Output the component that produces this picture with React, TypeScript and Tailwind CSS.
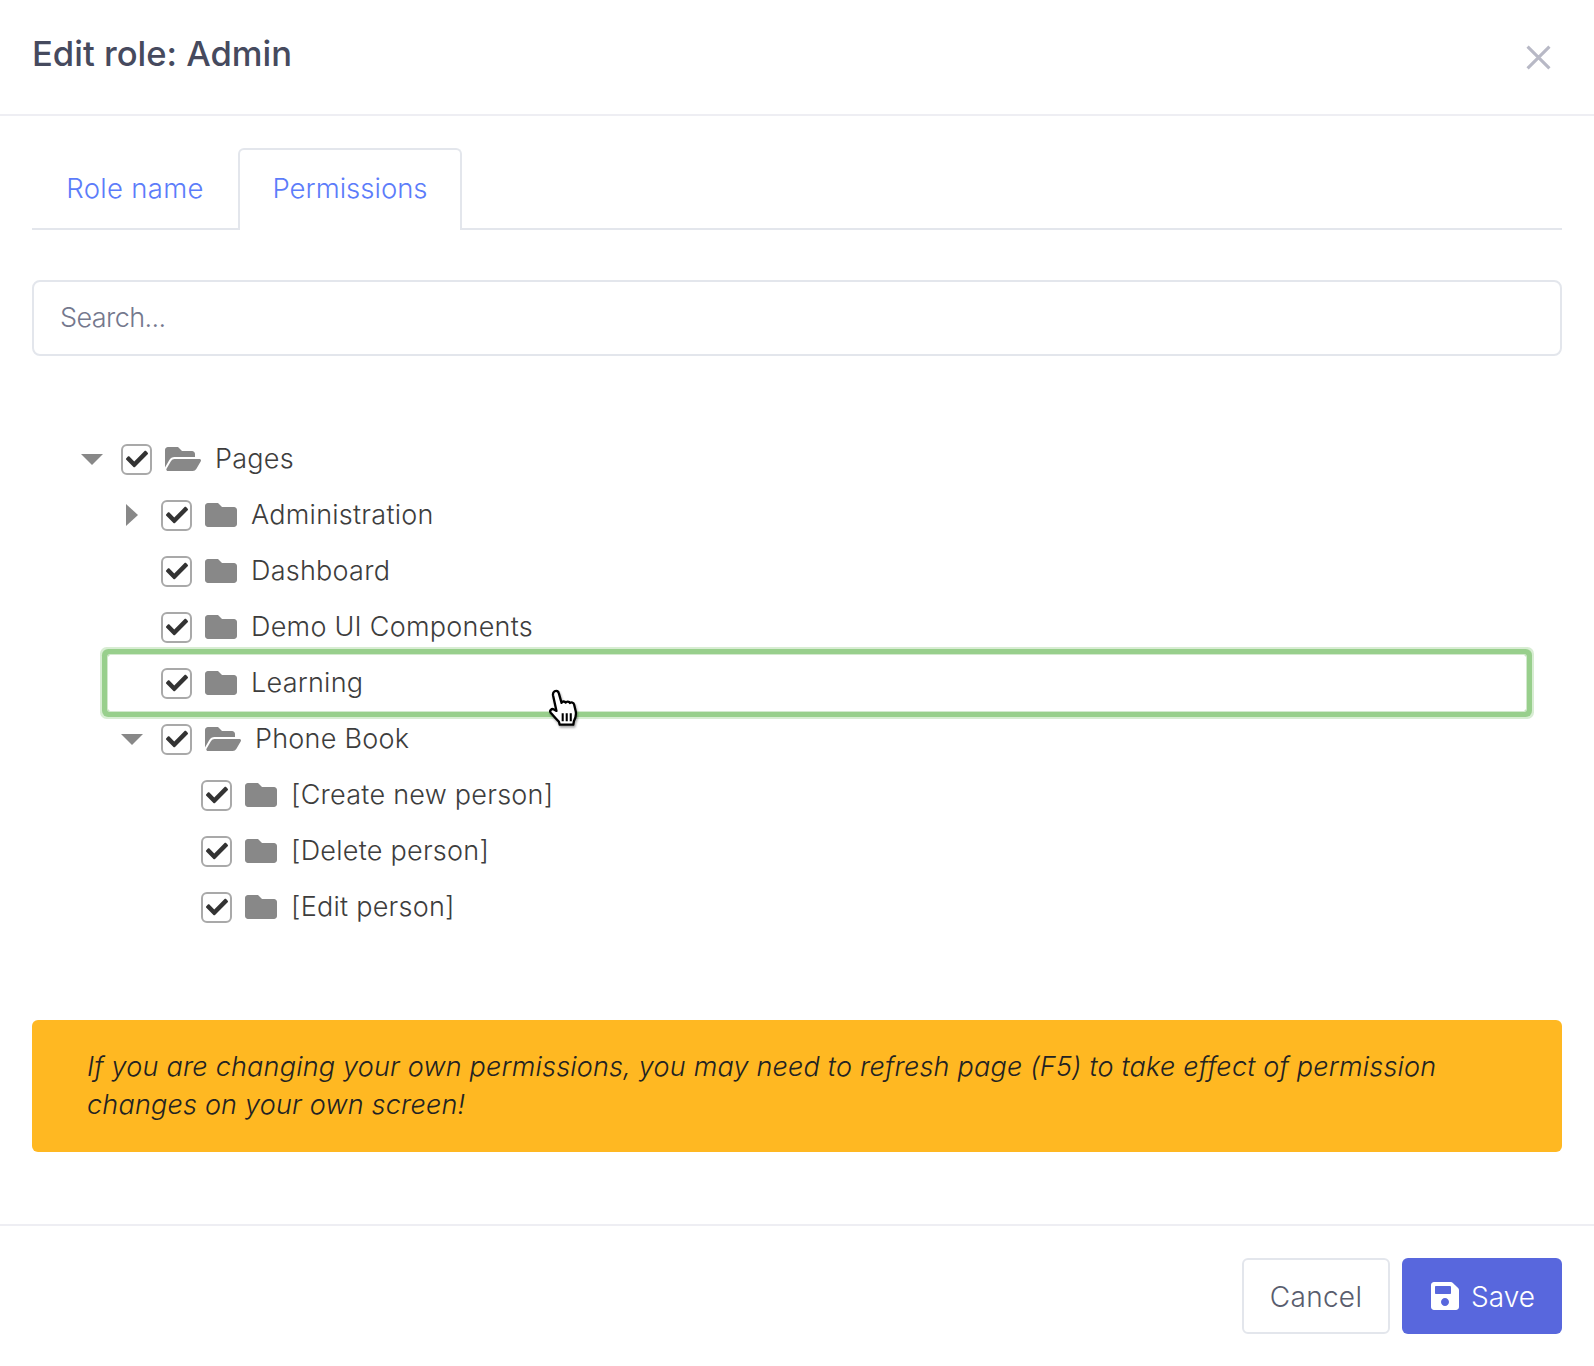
import { FaCheck, FaFolder, FaFolderOpen, FaSave } from 'react-icons/fa';

type Row = {
  label: string;
  level: 0 | 1 | 2;
  toggle?: 'open' | 'closed';
  open?: boolean;
  hovered?: boolean;
};

const ROWS: Row[] = [
  { label: 'Pages', level: 0, toggle: 'open', open: true },
  { label: 'Administration', level: 1, toggle: 'closed' },
  { label: 'Dashboard', level: 1 },
  { label: 'Demo UI Components', level: 1 },
  { label: 'Learning', level: 1, hovered: true },
  { label: 'Phone Book', level: 1, toggle: 'open', open: true },
  { label: '[Create new person]', level: 2 },
  { label: '[Delete person]', level: 2 },
  { label: '[Edit person]', level: 2 },
];

function Toggle({ state }: { state?: 'open' | 'closed' }) {
  if (state === 'open') {
    return <div className="w-0 h-0 border-x-[11px] border-x-transparent border-t-[11px] border-t-[#888888]" />;
  }
  if (state === 'closed') {
    return <div className="w-0 h-0 border-y-[11px] border-y-transparent border-l-[12px] border-l-[#888888]" />;
  }
  return null;
}

function TreeRow({ row }: { row: Row }) {
  const indent = row.level === 0 ? 'ml-0' : row.level === 1 ? 'ml-[40px]' : 'ml-[80px]';
  return (
    <div
      className={`relative h-[56px] flex items-center ${
        row.hovered
          ? 'ml-[45px] mr-[6px] rounded-[2px] shadow-[0_0_0_1px_#d3e9ce,0_0_0_6px_#98cf8c,0_0_0_8px_#d8edd3]'
          : indent
      }`}
    >
      <div className={`${row.hovered ? 'w-[53px]' : 'w-[58px]'} shrink-0 flex items-center justify-center`}>
        <Toggle state={row.toggle} />
      </div>
      <div className="w-[31px] h-[31px] shrink-0 border-2 border-[#a9a9a9] rounded-[6px] bg-white flex items-center justify-center text-[#333333]">
        <FaCheck size={22} />
      </div>
      {row.open ? (
        <FaFolderOpen size={36} className="ml-[13px] text-[#888888] shrink-0" />
      ) : (
        <FaFolder size={32} className="ml-[13px] text-[#888888] shrink-0" />
      )}
      <span className="ml-[14px] text-[#3d3d3d] text-[27px] tracking-[0.25px] font-light">{row.label}</span>
    </div>
  );
}

export default function App() {
  return (
    <div className="w-[1594px] h-[1366px] bg-white flex flex-col font-['Inter','Liberation_Sans',sans-serif] overflow-hidden">
      <div className="h-[116px] shrink-0 border-b-2 border-[#eeeef3] pl-[32px] pr-[43px] flex items-center justify-between">
        <h1 className="text-[34.6px] font-medium text-[#464a5e] -mt-[6px]">Edit role: Admin</h1>
        <svg viewBox="0 0 24 24" className="w-[25px] h-[25px]" stroke="#b8b9c6" strokeWidth="3" fill="none">
          <path d="M1.5 1.5 22.5 22.5M22.5 1.5 1.5 22.5" />
        </svg>
      </div>

      <div className="flex-1 px-[32px] pt-[32px] flex flex-col min-h-0">
        <div className="h-[82px] shrink-0 border-b-2 border-[#e3e6ec] flex items-stretch">
          <div className="w-[206px] h-[82px] pb-[1px] flex items-center justify-center text-[27.5px] tracking-[0.3px] text-[#5c7cfa] font-light">Role name</div>
          <div className="w-[224px] h-[82px] pb-[3px] border-2 border-b-0 border-[#e3e6ec] rounded-t-[6px] bg-white flex items-center justify-center text-[27.5px] text-[#5c7cfa] font-light">
            Permissions
          </div>
        </div>

        <input
          placeholder="Search..."
          className="mt-[50px] h-[76px] shrink-0 w-full border-2 border-[#e3e6ec] rounded-[8px] px-[26px] pb-[2px] text-[27px] tracking-[-0.6px] font-light placeholder:text-[#74788d]"
        />

        <div className="relative mt-[75px] ml-[31px] mr-[30px]">
          {ROWS.map(r => (
            <TreeRow key={r.label} row={r} />
          ))}
          <svg viewBox="0 0 30 33" className="absolute left-[484px] top-[258px] w-[36px] h-[38px]" style={{ filter: 'drop-shadow(1px 2px 1px rgba(0,0,0,.35))' }}>
            <path
              d="M6 2c1.6-1 3.2 0 3.6 1.6L12 12c.6-1.4 2.8-1.6 3.6-.2.8-1.2 3-1.2 3.7.4 1-1 3.2-.6 3.6 1.2l1.4 6c.6 3-.2 6-1.6 8.6l-.5 3H10.4l-.6-2.4c-2.4-2.6-5-5.4-7.2-8-1.4-1.8.8-4 2.8-2.8L7.6 19 4.6 5.4C4.4 4 5 2.6 6 2z"
              fill="#fff"
              stroke="#000"
              strokeWidth="2"
              strokeLinejoin="round"
            />
            <path d="M13 21v7M16.5 21v7M20 21v7" stroke="#000" strokeWidth="1.8" />
          </svg>
        </div>

        <div className="mt-[85px] h-[132px] shrink-0 bg-[#ffb822] rounded-[6px] px-[55px] pt-[28px] text-[27px] leading-[38px] tracking-[0.2px] italic font-light text-[#222222]">
          If you are changing your own permissions, you may need to refresh page (F5) to take effect of permission changes on your own screen!
        </div>
      </div>

      <div className="h-[142px] shrink-0 border-t-2 border-[#eeeef3] pr-[32px] flex items-center justify-end gap-[12px]">
        <button className="w-[148px] h-[76px] pt-[2px] border-2 border-[#e3e6ec] rounded-[6px] text-[28px] tracking-[0.3px] font-light text-[#595d6e]">Cancel</button>
        <button className="w-[160px] h-[76px] bg-[#5867dd] rounded-[6px] text-[28px] font-light text-white flex items-center justify-center gap-[10px]">
          <FaSave size={32} />
          <span className="pt-[2px]">Save</span>
        </button>
      </div>
    </div>
  );
}
